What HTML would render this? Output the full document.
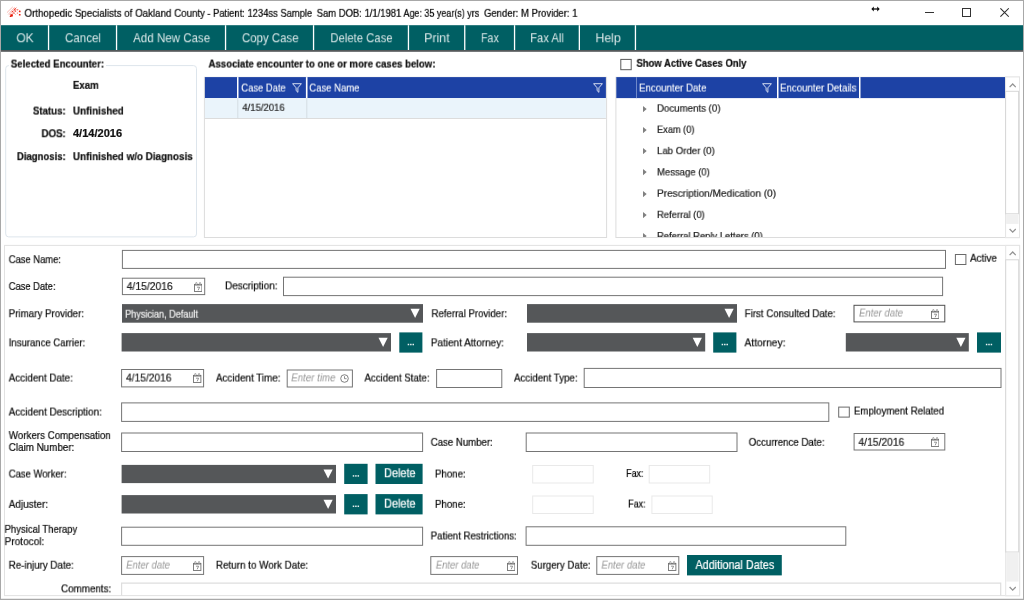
<!DOCTYPE html>
<html lang="en"><head><meta charset="utf-8"><title>Case Management</title>
<style>
*{margin:0;padding:0}
html,body{width:1024px;height:600px;overflow:hidden;background:#fff}
body{font-family:"Liberation Sans", sans-serif;position:relative}
#w{position:absolute;left:0;top:0;width:1024px;height:600px;overflow:hidden;background:#fff}
.b{position:absolute;}
.t{position:absolute;white-space:pre;transform-origin:0 0;will-change:transform;}
</style></head>
<body><div id="w">
<svg class="b" style="left:0;top:0" width="1024" height="600" viewBox="0 0 1024 600">
<rect x="1" y="25.2" width="1022" height="24.8" fill="#005f63"/>
<rect x="1" y="50" width="1022" height="1.8" fill="#54585a"/>
<rect x="47.9" y="25.2" width="1.3" height="24.8" fill="#ffffff"/>
<rect x="115.9" y="25.2" width="1.3" height="24.8" fill="#ffffff"/>
<rect x="224.9" y="25.2" width="1.3" height="24.8" fill="#ffffff"/>
<rect x="312.9" y="25.2" width="1.3" height="24.8" fill="#ffffff"/>
<rect x="407.8" y="25.2" width="1.3" height="24.8" fill="#ffffff"/>
<rect x="464.1" y="25.2" width="1.3" height="24.8" fill="#ffffff"/>
<rect x="513.9" y="25.2" width="1.3" height="24.8" fill="#ffffff"/>
<rect x="578.7" y="25.2" width="1.3" height="24.8" fill="#ffffff"/>
<rect x="634.8" y="25.2" width="1.3" height="24.8" fill="#ffffff"/>
<rect x="5.7" y="65.6" width="190.8" height="171.3" rx="3" fill="none" stroke="#dde5ec"/>
<rect x="9" y="58" width="97" height="12" fill="#fff"/>
<rect x="620.8" y="59.4" width="10.4" height="10.3" fill="#fff" stroke="#5a5a5a"/>
<rect x="204.4" y="77.3" width="402.2" height="160.2" fill="#fff" stroke="#dcdcdc"/>
<rect x="204.9" y="77.1" width="401" height="21" fill="#1d42a5"/>
<rect x="237" y="77.1" width="1.5" height="21" fill="#fff"/>
<rect x="305.9" y="77.1" width="1.6" height="21" fill="#fff"/>
<rect x="204.9" y="98.1" width="401" height="20" fill="#eaf4fb"/>
<rect x="204.9" y="118" width="401" height="1" fill="#dcdcdc"/>
<rect x="237.3" y="98.1" width="1" height="20" fill="#d5dde3"/>
<rect x="306.3" y="98.1" width="1" height="20" fill="#d5dde3"/>
<rect x="615.9" y="77.3" width="403.6" height="160.2" fill="#fff" stroke="#dcdcdc"/>
<rect x="616.3" y="77.1" width="388.8" height="21" fill="#1d42a5"/>
<rect x="636" y="77.1" width="1" height="21" fill="#6f88c9"/>
<rect x="777" y="77.1" width="1.5" height="21" fill="#fff"/>
<rect x="859" y="77.1" width="1.5" height="21" fill="#fff"/>
<rect x="4.5" y="245.4" width="1015.1" height="350.2" fill="#fff" stroke="#e2e2e2"/>
<rect x="122.4" y="250.4" width="823.1" height="18" fill="#fff" stroke="#757575"/>
<rect x="122.4" y="278.2" width="82.3" height="16.4" fill="#fff" stroke="#757575"/>
<rect x="283.5" y="277.2" width="659.1" height="18.4" fill="#fff" stroke="#757575"/>
<rect x="854" y="305.3" width="90.8" height="16.6" fill="#fff" stroke="#505050"/>
<rect x="121.6" y="369.5" width="82" height="17.4" fill="#fff" stroke="#757575"/>
<rect x="287.2" y="370" width="65.2" height="17" fill="#fff" stroke="#757575"/>
<rect x="436.6" y="369.5" width="65.2" height="18" fill="#fff" stroke="#757575"/>
<rect x="584.2" y="368.4" width="416.8" height="19.1" fill="#fff" stroke="#757575"/>
<rect x="121.6" y="402.9" width="707.2" height="18.5" fill="#fff" stroke="#757575"/>
<rect x="121.6" y="433" width="301" height="18.5" fill="#fff" stroke="#757575"/>
<rect x="526.2" y="433" width="210.8" height="18.5" fill="#fff" stroke="#757575"/>
<rect x="854.1" y="433.5" width="90.7" height="16.5" fill="#fff" stroke="#757575"/>
<rect x="532.7" y="465.5" width="60.5" height="17.5" fill="#fff" stroke="#e9e9e9"/>
<rect x="649.2" y="465.5" width="60.5" height="17.5" fill="#fff" stroke="#e9e9e9"/>
<rect x="532.7" y="496" width="60.5" height="17.5" fill="#fff" stroke="#e9e9e9"/>
<rect x="651.9" y="496" width="60.3" height="17.5" fill="#fff" stroke="#e9e9e9"/>
<rect x="121.6" y="527.2" width="301" height="18.1" fill="#fff" stroke="#757575"/>
<rect x="526.1" y="526.8" width="319.7" height="18.5" fill="#fff" stroke="#757575"/>
<rect x="121.6" y="556.6" width="82" height="17.8" fill="#fff" stroke="#757575"/>
<rect x="430.8" y="556.6" width="86.7" height="17.8" fill="#fff" stroke="#757575"/>
<rect x="596.8" y="556.6" width="82" height="17.8" fill="#fff" stroke="#757575"/>
<path d="M121.6 595.5V583.1H1000.7V595.5" fill="none" stroke="#dedede" stroke-width="1.2"/>
<rect x="955.4" y="254.5" width="10.5" height="10" fill="#fff" stroke="#6a6a6a"/>
<rect x="838.7" y="407.1" width="10.6" height="10" fill="#fff" stroke="#6a6a6a"/>
<rect x="122" y="304.1" width="301" height="18.6" fill="#555759"/>
<path d="M410.5 308.8H419.7L415.1 318Z" fill="#fff"/>
<rect x="527" y="304.1" width="210" height="18.6" fill="#555759"/>
<path d="M724.5 308.8H733.7L729.1 318Z" fill="#fff"/>
<rect x="121.6" y="333.1" width="269.4" height="18.4" fill="#555759"/>
<path d="M378.5 337.7H387.7L383.1 346.9Z" fill="#fff"/>
<rect x="527" y="333.1" width="178.2" height="18.4" fill="#555759"/>
<path d="M692.7 337.7H701.9L697.3 346.9Z" fill="#fff"/>
<rect x="845.8" y="333.1" width="123" height="18.4" fill="#555759"/>
<path d="M956.3 337.7H965.5L960.9 346.9Z" fill="#fff"/>
<rect x="121.6" y="464.9" width="214.4" height="18.2" fill="#555759"/>
<path d="M323.5 469.4H332.7L328.1 478.6Z" fill="#fff"/>
<rect x="121.6" y="495.1" width="214.4" height="18.4" fill="#555759"/>
<path d="M323.5 499.7H332.7L328.1 508.9Z" fill="#fff"/>
<rect x="399.3" y="332.4" width="23.1" height="20.2" fill="#005f63"/>
<rect x="407.7" y="343.77" width="1.5" height="1.5" fill="#e6f0f0"/>
<rect x="410.1" y="343.77" width="1.5" height="1.5" fill="#e6f0f0"/>
<rect x="412.5" y="343.77" width="1.5" height="1.5" fill="#e6f0f0"/>
<rect x="713.2" y="332.4" width="23.2" height="20.2" fill="#005f63"/>
<rect x="721.65" y="343.77" width="1.5" height="1.5" fill="#e6f0f0"/>
<rect x="724.05" y="343.77" width="1.5" height="1.5" fill="#e6f0f0"/>
<rect x="726.45" y="343.77" width="1.5" height="1.5" fill="#e6f0f0"/>
<rect x="977" y="332.4" width="24" height="20.2" fill="#005f63"/>
<rect x="985.85" y="343.77" width="1.5" height="1.5" fill="#e6f0f0"/>
<rect x="988.25" y="343.77" width="1.5" height="1.5" fill="#e6f0f0"/>
<rect x="990.65" y="343.77" width="1.5" height="1.5" fill="#e6f0f0"/>
<rect x="344.2" y="463.8" width="23.4" height="20.2" fill="#005f63"/>
<rect x="352.75" y="475.17" width="1.5" height="1.5" fill="#e6f0f0"/>
<rect x="355.15" y="475.17" width="1.5" height="1.5" fill="#e6f0f0"/>
<rect x="357.55" y="475.17" width="1.5" height="1.5" fill="#e6f0f0"/>
<rect x="344.2" y="494.1" width="23.4" height="20.3" fill="#005f63"/>
<rect x="352.75" y="505.53" width="1.5" height="1.5" fill="#e6f0f0"/>
<rect x="355.15" y="505.53" width="1.5" height="1.5" fill="#e6f0f0"/>
<rect x="357.55" y="505.53" width="1.5" height="1.5" fill="#e6f0f0"/>
<rect x="375.5" y="463.8" width="47.1" height="20.2" fill="#005f63"/>
<rect x="375.5" y="494.1" width="47.1" height="20.3" fill="#005f63"/>
<rect x="687" y="555" width="94.8" height="20.4" fill="#005f63"/>
</svg>
<div class="b" style="left:616px;top:98px;width:389px;height:139.2px;overflow:hidden"><div style="position:absolute;left:-616px;top:-98px">
<span class="t" style="left:657px;top:102px;font-size:10.2px;line-height:14px;color:#1a1a1a;transform:matrix(0.9492,0,0,0.920,0.04,0.48);-webkit-text-stroke:0.22px;">Documents (0)</span>
<span class="t" style="left:657px;top:123px;font-size:10.2px;line-height:14px;color:#1a1a1a;transform:matrix(0.9054,0,0,0.920,0.04,0.68);-webkit-text-stroke:0.22px;">Exam (0)</span>
<span class="t" style="left:657px;top:144px;font-size:10.2px;line-height:14px;color:#1a1a1a;transform:matrix(0.9438,0,0,0.920,0.04,0.98);-webkit-text-stroke:0.22px;">Lab Order (0)</span>
<span class="t" style="left:657px;top:166px;font-size:10.2px;line-height:14px;color:#1a1a1a;transform:matrix(0.9310,0,0,0.920,0.04,0.28);-webkit-text-stroke:0.22px;">Message (0)</span>
<span class="t" style="left:657px;top:187px;font-size:10.2px;line-height:14px;color:#1a1a1a;transform:matrix(0.9822,0,0,0.920,0.04,0.58);-webkit-text-stroke:0.22px;">Prescription/Medication (0)</span>
<span class="t" style="left:657px;top:208px;font-size:10.2px;line-height:14px;color:#1a1a1a;transform:matrix(0.9263,0,0,0.920,0.04,0.88);-webkit-text-stroke:0.22px;">Referral (0)</span>
<span class="t" style="left:657px;top:230px;font-size:10.2px;line-height:14px;color:#1a1a1a;transform:matrix(0.9243,0,0,0.920,0.04,0.18);-webkit-text-stroke:0.22px;">Referral Reply Letters (0)</span>
<svg class="b" style="left:642.9px;top:105.6px;" width="3.7" height="6.2" viewBox="0 0 3.7 6.2"><path d="M0 0L3.7 3.1L0 6.2Z" fill="#808080"/></svg>
<svg class="b" style="left:642.9px;top:126.80000000000001px;" width="3.7" height="6.2" viewBox="0 0 3.7 6.2"><path d="M0 0L3.7 3.1L0 6.2Z" fill="#808080"/></svg>
<svg class="b" style="left:642.9px;top:148.1px;" width="3.7" height="6.2" viewBox="0 0 3.7 6.2"><path d="M0 0L3.7 3.1L0 6.2Z" fill="#808080"/></svg>
<svg class="b" style="left:642.9px;top:169.4px;" width="3.7" height="6.2" viewBox="0 0 3.7 6.2"><path d="M0 0L3.7 3.1L0 6.2Z" fill="#808080"/></svg>
<svg class="b" style="left:642.9px;top:190.8px;" width="3.7" height="6.2" viewBox="0 0 3.7 6.2"><path d="M0 0L3.7 3.1L0 6.2Z" fill="#808080"/></svg>
<svg class="b" style="left:642.9px;top:212.1px;" width="3.7" height="6.2" viewBox="0 0 3.7 6.2"><path d="M0 0L3.7 3.1L0 6.2Z" fill="#808080"/></svg>
<svg class="b" style="left:642.9px;top:233.4px;" width="3.7" height="6.2" viewBox="0 0 3.7 6.2"><path d="M0 0L3.7 3.1L0 6.2Z" fill="#808080"/></svg>
</div></div>
<span class="t" style="left:24px;top:4px;font-size:11.5px;line-height:16px;color:#000;transform:matrix(0.8481,0,0,1.000,0.48,0.85);-webkit-text-stroke:0.22px;">Orthopedic Specialists of Oakland County</span>
<span class="t" style="left:207px;top:4px;font-size:11.5px;line-height:16px;color:#000;transform:matrix(0.8166,0,0,1.000,0.28,0.85);-webkit-text-stroke:0.22px;">- Patient: 1234ss Sample</span>
<span class="t" style="left:316px;top:4px;font-size:11.5px;line-height:16px;color:#000;transform:matrix(0.8223,0,0,1.000,0.68,0.85);-webkit-text-stroke:0.22px;">Sam DOB: 1/1/1981</span>
<span class="t" style="left:403px;top:4px;font-size:11.5px;line-height:16px;color:#000;transform:matrix(0.7795,0,0,1.000,0.48,0.85);-webkit-text-stroke:0.22px;">Age: 35 year(s) yrs</span>
<span class="t" style="left:483px;top:4px;font-size:11.5px;line-height:16px;color:#000;transform:matrix(0.8267,0,0,1.000,0.98,0.85);-webkit-text-stroke:0.22px;">Gender: M Provider: 1</span>
<span class="t" style="left:16px;top:29px;font-size:13.2px;line-height:17px;color:rgba(255,255,255,0.86);transform:matrix(0.9017,0,0,1.000,0.41,0.20);">OK</span>
<span class="t" style="left:64px;top:29px;font-size:13.2px;line-height:17px;color:rgba(255,255,255,0.86);transform:matrix(0.8813,0,0,1.000,0.91,0.20);">Cancel</span>
<span class="t" style="left:133px;top:29px;font-size:13.2px;line-height:17px;color:rgba(255,255,255,0.86);transform:matrix(0.8752,0,0,1.000,0.11,0.20);">Add New Case</span>
<span class="t" style="left:241px;top:29px;font-size:13.2px;line-height:17px;color:rgba(255,255,255,0.86);transform:matrix(0.8688,0,0,1.000,0.91,0.20);">Copy Case</span>
<span class="t" style="left:330px;top:29px;font-size:13.2px;line-height:17px;color:rgba(255,255,255,0.86);transform:matrix(0.8568,0,0,1.000,0.41,0.20);">Delete Case</span>
<span class="t" style="left:424px;top:29px;font-size:13.2px;line-height:17px;color:rgba(255,255,255,0.86);transform:matrix(0.9396,0,0,1.000,0.11,0.20);">Print</span>
<span class="t" style="left:480px;top:29px;font-size:13.2px;line-height:17px;color:rgba(255,255,255,0.86);transform:matrix(0.8137,0,0,1.000,0.91,0.20);">Fax</span>
<span class="t" style="left:530px;top:29px;font-size:13.2px;line-height:17px;color:rgba(255,255,255,0.86);transform:matrix(0.8512,0,0,1.000,0.11,0.20);">Fax All</span>
<span class="t" style="left:595px;top:29px;font-size:13.2px;line-height:17px;color:rgba(255,255,255,0.86);transform:matrix(0.9360,0,0,1.000,0.41,0.20);">Help</span>
<span class="t" style="left:10px;top:56px;font-size:11px;line-height:15px;color:#111;transform:matrix(0.8762,0,0,1.000,0.81,0.55);-webkit-text-stroke:0.22px;font-weight:bold;">Selected Encounter:</span>
<span class="t" style="left:72px;top:77px;font-size:11px;line-height:15px;color:#111;transform:matrix(0.8784,0,0,1.000,0.91,0.85);-webkit-text-stroke:0.22px;font-weight:bold;">Exam</span>
<span class="t" style="left:32px;top:103px;font-size:11px;line-height:15px;color:#111;transform:matrix(0.8795,0,0,1.000,0.91,0.55);-webkit-text-stroke:0.22px;font-weight:bold;">Status:</span>
<span class="t" style="left:72px;top:103px;font-size:11px;line-height:15px;color:#111;transform:matrix(0.8953,0,0,1.000,0.91,0.55);-webkit-text-stroke:0.22px;font-weight:bold;">Unfinished</span>
<span class="t" style="left:41px;top:126px;font-size:11px;line-height:15px;color:#111;transform:matrix(0.8796,0,0,1.000,0.51,0.25);-webkit-text-stroke:0.22px;font-weight:bold;">DOS:</span>
<span class="t" style="left:72px;top:126px;font-size:11px;line-height:15px;color:#111;transform:matrix(1.0052,0,0,1.000,0.91,0.25);-webkit-text-stroke:0.22px;font-weight:bold;">4/14/2016</span>
<span class="t" style="left:16px;top:149px;font-size:11px;line-height:15px;color:#111;transform:matrix(0.8676,0,0,1.000,0.90,0.15);-webkit-text-stroke:0.22px;font-weight:bold;">Diagnosis:</span>
<span class="t" style="left:72px;top:149px;font-size:11px;line-height:15px;color:#111;transform:matrix(0.8950,0,0,1.000,0.91,0.15);-webkit-text-stroke:0.22px;font-weight:bold;">Unfinished w/o Diagnosis</span>
<span class="t" style="left:208px;top:56px;font-size:11px;line-height:15px;color:#111;transform:matrix(0.8737,0,0,1.000,0.50,0.55);-webkit-text-stroke:0.22px;font-weight:bold;">Associate encounter to one or more cases below:</span>
<span class="t" style="left:636px;top:55px;font-size:11px;line-height:15px;color:#111;transform:matrix(0.8594,0,0,1.000,0.50,0.85);-webkit-text-stroke:0.22px;font-weight:bold;">Show Active Cases Only</span>
<span class="t" style="left:241px;top:80px;font-size:11.3px;line-height:15px;color:#fff;transform:matrix(0.8322,0,0,1.000,0.29,0.55);-webkit-text-stroke:0.1px;">Case Date</span>
<span class="t" style="left:309px;top:80px;font-size:11.3px;line-height:15px;color:#fff;transform:matrix(0.8418,0,0,1.000,0.29,0.55);-webkit-text-stroke:0.1px;">Case Name</span>
<span class="t" style="left:242px;top:101px;font-size:10px;line-height:14px;color:#2a2a2a;transform:matrix(0.9506,0,0,0.920,0.35,0.83);-webkit-text-stroke:0.22px;">4/15/2016</span>
<span class="t" style="left:638px;top:80px;font-size:11.3px;line-height:15px;color:#fff;transform:matrix(0.8601,0,0,1.000,0.99,0.55);-webkit-text-stroke:0.1px;">Encounter Date</span>
<span class="t" style="left:779px;top:80px;font-size:11.3px;line-height:15px;color:#fff;transform:matrix(0.8581,0,0,1.000,0.99,0.55);-webkit-text-stroke:0.1px;">Encounter Details</span>
<span class="t" style="left:8px;top:252px;font-size:11px;line-height:15px;color:#0c0c0c;transform:matrix(0.8552,0,0,1.000,0.71,0.15);-webkit-text-stroke:0.22px;">Case Name:</span>
<span class="t" style="left:8px;top:278px;font-size:11px;line-height:15px;color:#0c0c0c;transform:matrix(0.8502,0,0,1.000,0.71,0.95);-webkit-text-stroke:0.22px;">Case Date:</span>
<span class="t" style="left:8px;top:306px;font-size:11px;line-height:15px;color:#0c0c0c;transform:matrix(0.8861,0,0,1.000,0.71,0.25);-webkit-text-stroke:0.22px;">Primary Provider:</span>
<span class="t" style="left:8px;top:335px;font-size:11px;line-height:15px;color:#0c0c0c;transform:matrix(0.8687,0,0,1.000,0.71,0.35);-webkit-text-stroke:0.22px;">Insurance Carrier:</span>
<span class="t" style="left:8px;top:370px;font-size:11px;line-height:15px;color:#0c0c0c;transform:matrix(0.8972,0,0,1.000,0.71,0.55);-webkit-text-stroke:0.22px;">Accident Date:</span>
<span class="t" style="left:8px;top:404px;font-size:11px;line-height:15px;color:#0c0c0c;transform:matrix(0.9009,0,0,1.000,0.71,0.55);-webkit-text-stroke:0.22px;">Accident Description:</span>
<span class="t" style="left:8px;top:428px;font-size:11px;line-height:15px;color:#0c0c0c;transform:matrix(0.8898,0,0,1.000,0.71,0.05);-webkit-text-stroke:0.22px;">Workers Compensation</span>
<span class="t" style="left:8px;top:439px;font-size:11px;line-height:15px;color:#0c0c0c;transform:matrix(0.8941,0,0,1.000,0.71,0.95);-webkit-text-stroke:0.22px;">Claim Number:</span>
<span class="t" style="left:8px;top:466px;font-size:11px;line-height:15px;color:#0c0c0c;transform:matrix(0.8619,0,0,1.000,0.71,0.55);-webkit-text-stroke:0.22px;">Case Worker:</span>
<span class="t" style="left:8px;top:496px;font-size:11px;line-height:15px;color:#0c0c0c;transform:matrix(0.9071,0,0,1.000,0.71,0.85);-webkit-text-stroke:0.22px;">Adjuster:</span>
<span class="t" style="left:4px;top:521px;font-size:11px;line-height:15px;color:#0c0c0c;transform:matrix(0.8624,0,0,1.000,0.60,0.85);-webkit-text-stroke:0.22px;">Physical Therapy</span>
<span class="t" style="left:4px;top:534px;font-size:11px;line-height:15px;color:#0c0c0c;transform:matrix(0.9164,0,0,1.000,0.60,0.15);-webkit-text-stroke:0.22px;">Protocol:</span>
<span class="t" style="left:8px;top:557px;font-size:11px;line-height:15px;color:#0c0c0c;transform:matrix(0.8859,0,0,1.000,0.71,0.75);-webkit-text-stroke:0.22px;">Re-injury Date:</span>
<span class="t" style="left:61px;top:581px;font-size:11px;line-height:15px;color:#0c0c0c;transform:matrix(0.8923,0,0,1.000,0.01,0.35);-webkit-text-stroke:0.22px;">Comments:</span>
<span class="t" style="left:225px;top:278px;font-size:11px;line-height:15px;color:#0c0c0c;transform:matrix(0.9021,0,0,1.000,0.10,0.35);-webkit-text-stroke:0.22px;">Description:</span>
<span class="t" style="left:431px;top:306px;font-size:11px;line-height:15px;color:#0c0c0c;transform:matrix(0.8757,0,0,1.000,0.50,0.25);-webkit-text-stroke:0.22px;">Referral Provider:</span>
<span class="t" style="left:430px;top:335px;font-size:11px;line-height:15px;color:#0c0c0c;transform:matrix(0.9043,0,0,1.000,0.90,0.35);-webkit-text-stroke:0.22px;">Patient Attorney:</span>
<span class="t" style="left:744px;top:306px;font-size:11px;line-height:15px;color:#0c0c0c;transform:matrix(0.8787,0,0,1.000,0.71,0.25);-webkit-text-stroke:0.22px;">First Consulted Date:</span>
<span class="t" style="left:744px;top:335px;font-size:11px;line-height:15px;color:#0c0c0c;transform:matrix(0.9309,0,0,1.000,0.50,0.35);-webkit-text-stroke:0.22px;">Attorney:</span>
<span class="t" style="left:215px;top:370px;font-size:11px;line-height:15px;color:#0c0c0c;transform:matrix(0.8953,0,0,1.000,0.91,0.55);-webkit-text-stroke:0.22px;">Accident Time:</span>
<span class="t" style="left:364px;top:370px;font-size:11px;line-height:15px;color:#0c0c0c;transform:matrix(0.8782,0,0,1.000,0.50,0.55);-webkit-text-stroke:0.22px;">Accident State:</span>
<span class="t" style="left:514px;top:370px;font-size:11px;line-height:15px;color:#0c0c0c;transform:matrix(0.8824,0,0,1.000,0.00,0.55);-webkit-text-stroke:0.22px;">Accident Type:</span>
<span class="t" style="left:970px;top:250px;font-size:11px;line-height:15px;color:#0c0c0c;transform:matrix(0.9006,0,0,1.000,0.00,0.75);-webkit-text-stroke:0.22px;">Active</span>
<span class="t" style="left:853px;top:403px;font-size:11px;line-height:15px;color:#0c0c0c;transform:matrix(0.8833,0,0,1.000,0.90,0.55);-webkit-text-stroke:0.22px;">Employment Related</span>
<span class="t" style="left:430px;top:434px;font-size:11px;line-height:15px;color:#0c0c0c;transform:matrix(0.8755,0,0,1.000,0.70,0.85);-webkit-text-stroke:0.22px;">Case Number:</span>
<span class="t" style="left:748px;top:434px;font-size:11px;line-height:15px;color:#0c0c0c;transform:matrix(0.8792,0,0,1.000,0.71,0.85);-webkit-text-stroke:0.22px;">Occurrence Date:</span>
<span class="t" style="left:435px;top:466px;font-size:11px;line-height:15px;color:#0c0c0c;transform:matrix(0.8800,0,0,1.000,0.00,0.55);-webkit-text-stroke:0.22px;">Phone:</span>
<span class="t" style="left:435px;top:496px;font-size:11px;line-height:15px;color:#0c0c0c;transform:matrix(0.8800,0,0,1.000,0.00,0.85);-webkit-text-stroke:0.22px;">Phone:</span>
<span class="t" style="left:626px;top:466px;font-size:11px;line-height:15px;color:#0c0c0c;transform:matrix(0.8124,0,0,1.000,0.11,0.05);-webkit-text-stroke:0.22px;">Fax:</span>
<span class="t" style="left:628px;top:496px;font-size:11px;line-height:15px;color:#0c0c0c;transform:matrix(0.8124,0,0,1.000,0.21,0.55);-webkit-text-stroke:0.22px;">Fax:</span>
<span class="t" style="left:430px;top:528px;font-size:11px;line-height:15px;color:#0c0c0c;transform:matrix(0.8800,0,0,1.000,0.70,0.45);-webkit-text-stroke:0.22px;">Patient Restrictions:</span>
<span class="t" style="left:215px;top:557px;font-size:11px;line-height:15px;color:#0c0c0c;transform:matrix(0.8949,0,0,1.000,0.91,0.75);-webkit-text-stroke:0.22px;">Return to Work Date:</span>
<span class="t" style="left:530px;top:557px;font-size:11px;line-height:15px;color:#0c0c0c;transform:matrix(0.8809,0,0,1.000,0.80,0.75);-webkit-text-stroke:0.22px;">Surgery Date:</span>
<span class="t" style="left:384px;top:465px;font-size:12px;line-height:16px;color:#fff;transform:matrix(0.9075,0,0,1.000,0.06,0.25);-webkit-text-stroke:0.22px;">Delete</span>
<span class="t" style="left:384px;top:495px;font-size:12px;line-height:16px;color:#fff;transform:matrix(0.9075,0,0,1.000,0.06,0.65);-webkit-text-stroke:0.22px;">Delete</span>
<span class="t" style="left:695px;top:557px;font-size:12px;line-height:16px;color:#fff;transform:matrix(0.9003,0,0,1.000,0.46,0.05);-webkit-text-stroke:0.22px;">Additional Dates</span>
<span class="t" style="left:126px;top:278px;font-size:11px;line-height:15px;color:#222;transform:matrix(0.9418,0,0,1.000,0.70,0.95);-webkit-text-stroke:0.22px;">4/15/2016</span>
<span class="t" style="left:126px;top:370px;font-size:11px;line-height:15px;color:#222;transform:matrix(0.9296,0,0,1.000,0.00,0.55);-webkit-text-stroke:0.22px;">4/15/2016</span>
<span class="t" style="left:858px;top:434px;font-size:11px;line-height:15px;color:#222;transform:matrix(0.9357,0,0,1.000,0.50,0.85);-webkit-text-stroke:0.22px;">4/15/2016</span>
<span class="t" style="left:859px;top:305px;font-size:10.5px;line-height:14px;color:#989898;transform:matrix(0.9090,0,0,1.000,0.03,0.56);font-style:italic;">Enter date</span>
<span class="t" style="left:291px;top:370px;font-size:10.5px;line-height:14px;color:#989898;transform:matrix(0.9245,0,0,1.000,0.23,0.37);font-style:italic;">Enter time</span>
<span class="t" style="left:126px;top:557px;font-size:10.5px;line-height:14px;color:#989898;transform:matrix(0.9049,0,0,1.000,0.23,0.57);font-style:italic;">Enter date</span>
<span class="t" style="left:435px;top:557px;font-size:10.5px;line-height:14px;color:#989898;transform:matrix(0.9008,0,0,1.000,0.83,0.57);font-style:italic;">Enter date</span>
<span class="t" style="left:601px;top:557px;font-size:10.5px;line-height:14px;color:#989898;transform:matrix(0.9090,0,0,1.000,0.43,0.57);font-style:italic;">Enter date</span>
<span class="t" style="left:125px;top:307px;font-size:10.3px;line-height:14px;color:#f2f2f2;transform:matrix(0.8824,0,0,1.000,0.24,0.75);-webkit-text-stroke:0.22px;">Physician, Default</span>
<svg class="b" style="left:4px;top:3px;" width="24" height="18" viewBox="0 0 800 600"><g stroke="#ef3a2a" stroke-width="22" stroke-linecap="round" opacity="0.55"><path d="M108 312L282 138"/><path d="M150 372L345 152"/><path d="M185 395L415 150"/><path d="M215 445L395 215"/></g><g fill="#e81a0a"><rect x="212" y="372" width="84" height="80" rx="14"/><rect x="192" y="425" width="56" height="42" rx="12"/></g><g fill="#ec2c1c" opacity="0.9"><rect x="328" y="203" width="44" height="44"/><rect x="366" y="252" width="40" height="40"/><rect x="312" y="318" width="44" height="40"/><rect x="262" y="266" width="40" height="40"/><rect x="356" y="170" width="36" height="36"/></g><g fill="#ea2414"><rect x="496" y="254" width="56" height="56" rx="10"/><rect x="496" y="364" width="56" height="56" rx="10"/></g><g fill="#ee3a2a" opacity="0.6"><rect x="430" y="198" width="38" height="48" rx="8"/><rect x="428" y="314" width="40" height="48" rx="8"/><rect x="366" y="372" width="26" height="26" rx="6"/></g></svg>
<svg class="b" style="left:870.7px;top:5.2px;" width="9" height="8" viewBox="0 0 9 8"><path d="M1 4H8" stroke="#111" stroke-width="1.3" fill="none"/><path d="M0.3 4L2.8 1.6V6.4ZM8.7 4L6.2 1.6V6.4Z" fill="#111"/></svg>
<div class="b" style="left:925px;top:12px;width:9px;height:1px;background:#333"></div>
<div class="b" style="left:962px;top:8px;width:9px;height:9px;box-sizing:border-box;border:1px solid #333"></div>
<svg class="b" style="left:999.7px;top:7.9px;" width="9.2" height="9" viewBox="0 0 9.2 9"><path d="M0.4 0.3L8.8 8.7M8.8 0.3L0.4 8.7" stroke="#2e2e2e" stroke-width="1.05" fill="none"/></svg>
<svg class="b" style="left:292.3px;top:82.8px;" width="10" height="10" viewBox="0 0 10 10"><path d="M0.6 0.7H9.4L5.9 4.8V9.3L4.1 7.6V4.8Z" stroke="#e6ebf7" stroke-width="0.9" fill="none" stroke-linejoin="round"/></svg>
<svg class="b" style="left:592.5px;top:82.8px;" width="10" height="10" viewBox="0 0 10 10"><path d="M0.6 0.7H9.4L5.9 4.8V9.3L4.1 7.6V4.8Z" stroke="#e6ebf7" stroke-width="0.9" fill="none" stroke-linejoin="round"/></svg>
<svg class="b" style="left:762.3px;top:82.8px;" width="10" height="10" viewBox="0 0 10 10"><path d="M0.6 0.7H9.4L5.9 4.8V9.3L4.1 7.6V4.8Z" stroke="#e6ebf7" stroke-width="0.9" fill="none" stroke-linejoin="round"/></svg>
<svg class="b" style="left:193.9px;top:281.9px;" width="8.4" height="10" viewBox="0 0 8.4 10"><rect x="0.5" y="2.4" width="7.4" height="7.1" fill="#fff" stroke="#727272" stroke-width="0.9"/><path d="M0.5 2.9H7.9" stroke="#727272" stroke-width="1.2"/><rect x="1.7" y="0.5" width="1.3" height="2.2" rx="0.6" fill="#fff" stroke="#777" stroke-width="0.6"/><rect x="5.4" y="0.5" width="1.3" height="2.2" rx="0.6" fill="#fff" stroke="#777" stroke-width="0.6"/><path d="M3 5.2H5.6L4.2 8.3" stroke="#727272" stroke-width="0.75" fill="none"/></svg>
<svg class="b" style="left:193.2px;top:373.3px;" width="8.4" height="10" viewBox="0 0 8.4 10"><rect x="0.5" y="2.4" width="7.4" height="7.1" fill="#fff" stroke="#727272" stroke-width="0.9"/><path d="M0.5 2.9H7.9" stroke="#727272" stroke-width="1.2"/><rect x="1.7" y="0.5" width="1.3" height="2.2" rx="0.6" fill="#fff" stroke="#777" stroke-width="0.6"/><rect x="5.4" y="0.5" width="1.3" height="2.2" rx="0.6" fill="#fff" stroke="#777" stroke-width="0.6"/><path d="M3 5.2H5.6L4.2 8.3" stroke="#727272" stroke-width="0.75" fill="none"/></svg>
<svg class="b" style="left:930.8px;top:308.8px;" width="8.4" height="10" viewBox="0 0 8.4 10"><rect x="0.5" y="2.4" width="7.4" height="7.1" fill="#fff" stroke="#727272" stroke-width="0.9"/><path d="M0.5 2.9H7.9" stroke="#727272" stroke-width="1.2"/><rect x="1.7" y="0.5" width="1.3" height="2.2" rx="0.6" fill="#fff" stroke="#777" stroke-width="0.6"/><rect x="5.4" y="0.5" width="1.3" height="2.2" rx="0.6" fill="#fff" stroke="#777" stroke-width="0.6"/><path d="M3 5.2H5.6L4.2 8.3" stroke="#727272" stroke-width="0.75" fill="none"/></svg>
<svg class="b" style="left:930.8px;top:437px;" width="8.4" height="10" viewBox="0 0 8.4 10"><rect x="0.5" y="2.4" width="7.4" height="7.1" fill="#fff" stroke="#727272" stroke-width="0.9"/><path d="M0.5 2.9H7.9" stroke="#727272" stroke-width="1.2"/><rect x="1.7" y="0.5" width="1.3" height="2.2" rx="0.6" fill="#fff" stroke="#777" stroke-width="0.6"/><rect x="5.4" y="0.5" width="1.3" height="2.2" rx="0.6" fill="#fff" stroke="#777" stroke-width="0.6"/><path d="M3 5.2H5.6L4.2 8.3" stroke="#727272" stroke-width="0.75" fill="none"/></svg>
<svg class="b" style="left:193.2px;top:560.5px;" width="8.4" height="10" viewBox="0 0 8.4 10"><rect x="0.5" y="2.4" width="7.4" height="7.1" fill="#fff" stroke="#727272" stroke-width="0.9"/><path d="M0.5 2.9H7.9" stroke="#727272" stroke-width="1.2"/><rect x="1.7" y="0.5" width="1.3" height="2.2" rx="0.6" fill="#fff" stroke="#777" stroke-width="0.6"/><rect x="5.4" y="0.5" width="1.3" height="2.2" rx="0.6" fill="#fff" stroke="#777" stroke-width="0.6"/><path d="M3 5.2H5.6L4.2 8.3" stroke="#727272" stroke-width="0.75" fill="none"/></svg>
<svg class="b" style="left:506.7px;top:560.5px;" width="8.4" height="10" viewBox="0 0 8.4 10"><rect x="0.5" y="2.4" width="7.4" height="7.1" fill="#fff" stroke="#727272" stroke-width="0.9"/><path d="M0.5 2.9H7.9" stroke="#727272" stroke-width="1.2"/><rect x="1.7" y="0.5" width="1.3" height="2.2" rx="0.6" fill="#fff" stroke="#777" stroke-width="0.6"/><rect x="5.4" y="0.5" width="1.3" height="2.2" rx="0.6" fill="#fff" stroke="#777" stroke-width="0.6"/><path d="M3 5.2H5.6L4.2 8.3" stroke="#727272" stroke-width="0.75" fill="none"/></svg>
<svg class="b" style="left:668.2px;top:560.5px;" width="8.4" height="10" viewBox="0 0 8.4 10"><rect x="0.5" y="2.4" width="7.4" height="7.1" fill="#fff" stroke="#727272" stroke-width="0.9"/><path d="M0.5 2.9H7.9" stroke="#727272" stroke-width="1.2"/><rect x="1.7" y="0.5" width="1.3" height="2.2" rx="0.6" fill="#fff" stroke="#777" stroke-width="0.6"/><rect x="5.4" y="0.5" width="1.3" height="2.2" rx="0.6" fill="#fff" stroke="#777" stroke-width="0.6"/><path d="M3 5.2H5.6L4.2 8.3" stroke="#727272" stroke-width="0.75" fill="none"/></svg>
<svg class="b" style="left:340.2px;top:374px;" width="9" height="9" viewBox="0 0 9 9"><circle cx="4.5" cy="4.5" r="3.8" fill="none" stroke="#727272" stroke-width="0.9"/><path d="M4.5 2.2V4.7H6.6" stroke="#727272" stroke-width="0.8" fill="none"/></svg>
<svg class="b" style="left:0;top:0" width="1024" height="600" viewBox="0 0 1024 600"><rect x="1005.1" y="77.1" width="14.4" height="160.4" fill="#fff"/><rect x="1005.6" y="76.9" width="13.9" height="160.8" fill="none" stroke="#e4e4e4" stroke-width="1"/><rect x="1005.6" y="91.3" width="13.0" height="122.5" fill="#fff" stroke="#d6d6d6" stroke-width="1"/><rect x="1006.1" y="214.5" width="12.4" height="9.4" fill="#f0f0f0"/><rect x="1005.1" y="245.6" width="14.5" height="350" fill="#fff"/><rect x="1005.7" y="245.4" width="13.9" height="350.4" fill="none" stroke="#e4e4e4" stroke-width="1"/><rect x="1005.7" y="259.8" width="13.0" height="292.2" fill="#fff" stroke="#d6d6d6" stroke-width="1"/><rect x="1006.2" y="552.6" width="12.4" height="29.0" fill="#f0f0f0"/></svg>
<svg class="b" style="left:1008.8px;top:82.8px;" width="7.4" height="5.2" viewBox="0 0 7.4 5.2"><path d="M0.6 4.1L3.7 1L6.8 4.1" stroke="#949494" stroke-width="1.3" fill="none"/></svg>
<svg class="b" style="left:1008.8px;top:228.4px;" width="7.4" height="5.2" viewBox="0 0 7.4 5.2"><path d="M0.6 1L3.7 4.1L6.8 1" stroke="#949494" stroke-width="1.3" fill="none"/></svg>
<svg class="b" style="left:1008.8px;top:250.8px;" width="7.4" height="5.2" viewBox="0 0 7.4 5.2"><path d="M0.6 4.1L3.7 1L6.8 4.1" stroke="#949494" stroke-width="1.3" fill="none"/></svg>
<svg class="b" style="left:1008.8px;top:586.3px;" width="7.4" height="5.2" viewBox="0 0 7.4 5.2"><path d="M0.6 1L3.7 4.1L6.8 1" stroke="#949494" stroke-width="1.3" fill="none"/></svg>
<svg class="b" style="left:0;top:0" width="1024" height="600" viewBox="0 0 1024 600"><path d="M0 0H1024V600H0ZM1 1V598.7H1023V1Z" fill="#a8a8a8" fill-rule="evenodd"/></svg>
</div></body></html>
